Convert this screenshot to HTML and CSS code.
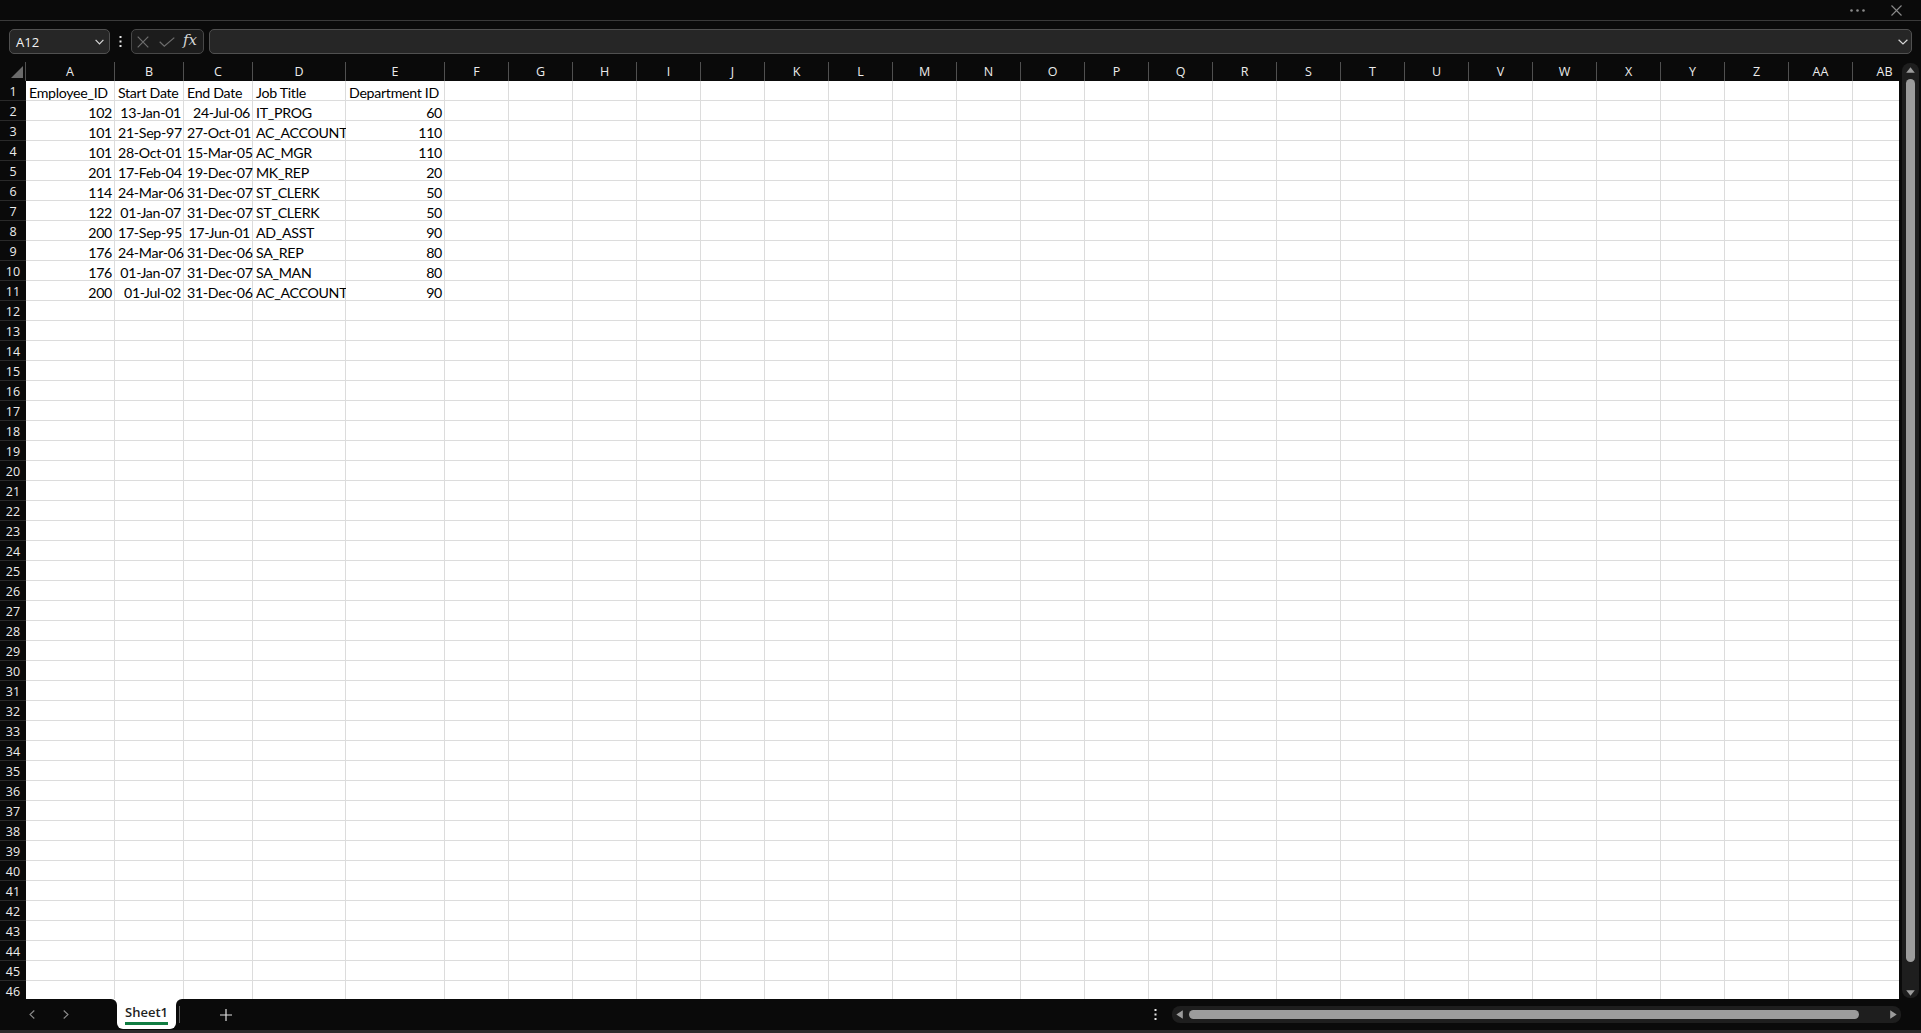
FILE: index.html
```html
<!DOCTYPE html>
<html lang="en">
<head>
<meta charset="utf-8">
<title>Sheet1</title>
<link rel="stylesheet" href="styles.css">
</head>
<body>
<div class="app">
  <div class="titlebar">
    <svg class="tb-dots" width="15" height="3" viewBox="0 0 15 3"><circle cx="1.5" cy="1.5" r="1.3" fill="#8a8a8a"/><circle cx="7.5" cy="1.5" r="1.3" fill="#8a8a8a"/><circle cx="13.5" cy="1.5" r="1.3" fill="#8a8a8a"/></svg>
    <svg class="tb-close" width="11" height="11" viewBox="0 0 11 11"><path d="M0.5 0.5L10.5 10.5M10.5 0.5L0.5 10.5" stroke="#8a8a8a" stroke-width="1.1" fill="none"/></svg>
  </div>

  <div class="formulabar">
    <div class="namebox">
      <span class="namebox-text">A12</span>
      <svg width="9" height="6" viewBox="0 0 9 6"><path d="M0.6 0.8L4.5 4.8L8.4 0.8" stroke="#d6d6d6" stroke-width="1.2" fill="none"/></svg>
    </div>
    <div class="fb-sep">
      <svg width="3" height="11" viewBox="0 0 3 11"><rect x="0.5" y="0" width="2" height="2" fill="#e6e6e6"/><rect x="0.5" y="4.5" width="2" height="2" fill="#e6e6e6"/><rect x="0.5" y="9" width="2" height="2" fill="#e6e6e6"/></svg>
    </div>
    <div class="fxbox">
      <svg class="fx-cancel" width="12" height="12" viewBox="0 0 12 12"><path d="M0.7 0.7L11.3 11.3M11.3 0.7L0.7 11.3" stroke="#6e6e6e" stroke-width="1.2" fill="none"/></svg>
      <svg class="fx-enter" width="16" height="10" viewBox="0 0 16 10"><path d="M0.7 4.8L5.3 9.2L15.3 0.6" stroke="#6e6e6e" stroke-width="1.2" fill="none"/></svg>
      <span class="fx">fx</span>
    </div>
    <div class="finput">
      <svg width="10" height="6" viewBox="0 0 10 6"><path d="M0.6 0.8L5 5L9.4 0.8" stroke="#d6d6d6" stroke-width="1.2" fill="none"/></svg>
    </div>
  </div>

  <div class="main">
    <div class="sheet">
      <div class="grid" id="grid"></div>
    </div>
    <div class="vscroll">
      <div class="vtrack">
        <svg width="9" height="6" viewBox="0 0 9 6"><path d="M4.5 0.3L8.8 5.8H0.2Z" fill="#9c9c9c"/></svg>
        <div class="vthumb"></div>
        <svg class="vdown" width="9" height="6" viewBox="0 0 9 6"><path d="M0.2 0.2H8.8L4.5 5.7Z" fill="#9c9c9c"/></svg>
      </div>
    </div>
  </div>

  <div class="bottombar">
    <div class="nav">
      <svg width="6" height="9" viewBox="0 0 6 9"><path d="M5.3 0.5L1 4.5L5.3 8.5" stroke="#8c8c8c" stroke-width="1.1" fill="none"/></svg>
      <svg width="6" height="9" viewBox="0 0 6 9"><path d="M0.7 0.5L5 4.5L0.7 8.5" stroke="#8c8c8c" stroke-width="1.1" fill="none"/></svg>
    </div>
    <div class="tab"><span class="tab-label">Sheet1</span></div>
    <div class="rest">
      <div class="tab-sep"></div>
      <svg class="plus" width="12" height="12" viewBox="0 0 12 12"><path d="M6 0V12M0 6H12" stroke="#e0e0e0" stroke-width="1.2" fill="none"/></svg>
      <div class="spacer"></div>
      <svg class="kebab" width="3" height="11" viewBox="0 0 3 11"><rect x="0.5" y="0" width="2" height="2" fill="#e6e6e6"/><rect x="0.5" y="4.5" width="2" height="2" fill="#e6e6e6"/><rect x="0.5" y="9" width="2" height="2" fill="#e6e6e6"/></svg>
      <div class="htrack">
        <svg width="7" height="9" viewBox="0 0 7 9"><path d="M6.8 0.2V8.8L0.3 4.5Z" fill="#9c9c9c"/></svg>
        <div class="hthumb"></div>
        <svg class="hright" width="7" height="9" viewBox="0 0 7 9"><path d="M0.2 0.2V8.8L6.7 4.5Z" fill="#9c9c9c"/></svg>
      </div>
    </div>
  </div>
  <div class="winedge"></div>
</div>
<script src="script.js"></script>
</body>
</html>
```

FILE: styles.css
```css
* {
  box-sizing: border-box;
}

html,
body {
  margin: 0;
  padding: 0;
  background: #0a0a0a;
  overflow: hidden;
}

.app {
  width: 1921px;
  height: 1033px;
  display: flex;
  flex-direction: column;
  font-family: "Open Sans", "Noto Sans", sans-serif;
  background: #0a0a0a;
}

/* title bar */
.titlebar {
  height: 21px;
  flex: none;
  border-bottom: 1px solid #3a3a3a;
  display: flex;
  justify-content: flex-end;
  align-items: center;
  gap: 26px;
  padding-right: 19px;
}

/* formula bar */
.formulabar {
  height: 41px;
  flex: none;
  display: flex;
  align-items: center;
  padding: 0 9px;
}

.namebox {
  width: 101px;
  height: 25px;
  border: 1px solid #505050;
  border-radius: 5px;
  background: #262626;
  display: flex;
  align-items: center;
  justify-content: space-between;
  padding: 0 5px 0 6px;
  color: #f2f2f2;
  font-size: 13px;
}

.fb-sep {
  width: 21px;
  display: flex;
  justify-content: center;
}

.fxbox {
  width: 73px;
  height: 25px;
  border: 1px solid #484848;
  border-radius: 5px;
  background: #1c1c1c;
  display: flex;
  align-items: center;
  padding-left: 5px;
}

.fx-enter {
  margin-left: 10px;
}

.fx {
  margin-left: 8px;
  font-family: "DejaVu Serif", "Liberation Serif", serif;
  font-style: italic;
  font-size: 15px;
  color: #d4d4d4;
  line-height: 1;
  margin-top: -2px;
}

.finput {
  flex: 1;
  margin-left: 5px;
  height: 25px;
  border: 1px solid #505050;
  border-radius: 5px;
  background: #262626;
  display: flex;
  justify-content: flex-end;
  align-items: center;
  padding-right: 3px;
}

/* sheet */
.main {
  height: 937px;
  flex: none;
  display: flex;
}

.sheet {
  width: 1899px;
  flex: none;
  overflow: hidden;
  background: #ffffff;
}

.grid {
  display: grid;
  grid-template-columns: 26px 89px 69px 69px 93px 99px repeat(23, 64px);
  grid-template-rows: 19px;
  grid-auto-rows: 20px;
  width: max-content;
}

.corner {
  background: #0a0a0a;
  border-right: 1px solid #505050;
  display: flex;
  align-items: flex-end;
  justify-content: flex-end;
  padding: 0 2px 3px 0;
}

.tri {
  width: 12px;
  height: 12px;
  background: #6b6b6b;
  clip-path: polygon(100% 0, 100% 100%, 0 100%);
}

.ch {
  background: #0a0a0a;
  color: #ececec;
  font-size: 12.5px;
  display: flex;
  align-items: center;
  justify-content: center;
  border-right: 1px solid #505050;
}

.rh {
  background: #0a0a0a;
  color: #ececec;
  font-size: 12.5px;
  display: flex;
  align-items: center;
  justify-content: center;
  padding-top: 1px;
  border-bottom: 1px solid #2a2a2a;
}

.c {
  background: #ffffff;
  border-right: 1px solid #dcdcdc;
  border-bottom: 1px solid #dcdcdc;
  font-family: Lato, "Liberation Sans", sans-serif;
  font-size: 14.2px;
  letter-spacing: -0.3px;
  line-height: 23px;
  padding: 0 2px 0 3px;
  white-space: nowrap;
  color: #000000;
}

.r {
  text-align: right;
}

/* vertical scrollbar */
.vscroll {
  width: 22px;
  flex: none;
  padding: 1px 2px 1px 3px;
  display: flex;
}

.vtrack {
  flex: 1;
  background: #1e1e1e;
  border-radius: 8px;
  display: flex;
  flex-direction: column;
  align-items: center;
  padding: 4px 0 2px 0;
}

.vthumb {
  width: 9px;
  height: 883px;
  margin-top: 6px;
  background: #9c9c9c;
  border-radius: 5px;
}

.vdown {
  margin-top: auto;
}

/* bottom bar */
.bottombar {
  height: 31px;
  flex: none;
  display: flex;
  background: linear-gradient(#ffffff 50%, #0a0a0a 50%);
}

.nav {
  width: 117px;
  background: #0a0a0a;
  border-top-right-radius: 6px;
  display: flex;
  align-items: center;
  gap: 28px;
  padding-left: 29px;
}

.tab {
  width: 59px;
  height: 30px;
  background: #ffffff;
  border-radius: 0 0 6px 6px;
  display: flex;
  justify-content: center;
  align-items: flex-start;
  padding-top: 5px;
}

.tab-label {
  display: inline-block;
  font-size: 13px;
  font-weight: 600;
  color: #1f1f1f;
  line-height: 17px;
  padding-bottom: 1px;
  border-bottom: 3px solid #107c41;
}

.rest {
  flex: 1;
  background: #0a0a0a;
  border-top-left-radius: 6px;
  display: flex;
  align-items: center;
  padding-left: 3px;
  padding-right: 20px;
}

.tab-sep {
  width: 1px;
  height: 17px;
  background: #5c5c5c;
}

.plus {
  margin-left: 40px;
}

.spacer {
  flex: 1;
}

.kebab {
  margin-right: 15px;
}

.htrack {
  width: 729px;
  height: 17px;
  background: #1e1e1e;
  border-radius: 8px;
  display: flex;
  align-items: center;
  padding: 0 4px 0 4px;
}

.hthumb {
  width: 670px;
  height: 9px;
  margin-left: 6px;
  background: #9c9c9c;
  border-radius: 5px;
}

.hright {
  margin-left: auto;
}

.winedge {
  height: 3px;
  flex: none;
  background: #2b2b2b;
}
```

FILE: script.js
```js
(function () {
  var data = [
    ['Employee_ID', 'Start Date', 'End Date', 'Job Title', 'Department ID'],
    ['102', '13-Jan-01', '24-Jul-06', 'IT_PROG', '60'],
    ['101', '21-Sep-97', '27-Oct-01', 'AC_ACCOUNT', '110'],
    ['101', '28-Oct-01', '15-Mar-05', 'AC_MGR', '110'],
    ['201', '17-Feb-04', '19-Dec-07', 'MK_REP', '20'],
    ['114', '24-Mar-06', '31-Dec-07', 'ST_CLERK', '50'],
    ['122', '01-Jan-07', '31-Dec-07', 'ST_CLERK', '50'],
    ['200', '17-Sep-95', '17-Jun-01', 'AD_ASST', '90'],
    ['176', '24-Mar-06', '31-Dec-06', 'SA_REP', '80'],
    ['176', '01-Jan-07', '31-Dec-07', 'SA_MAN', '80'],
    ['200', '01-Jul-02', '31-Dec-06', 'AC_ACCOUNT', '90']
  ];

  var cols = [];
  for (var i = 0; i < 26; i++) cols.push(String.fromCharCode(65 + i));
  cols.push('AA', 'AB');

  var grid = document.getElementById('grid');
  var frag = document.createDocumentFragment();

  function el(cls, text) {
    var d = document.createElement('div');
    d.className = cls;
    if (text !== undefined && text !== '') d.textContent = text;
    return d;
  }

  var corner = el('corner');
  corner.appendChild(el('tri'));
  frag.appendChild(corner);
  cols.forEach(function (c) { frag.appendChild(el('ch', c)); });

  for (var r = 1; r <= 46; r++) {
    frag.appendChild(el('rh', String(r)));
    var row = data[r - 1] || [];
    for (var c = 0; c < cols.length; c++) {
      var txt = row[c] || '';
      var cls = 'c';
      if (r > 1 && c < 5 && c !== 3) cls += ' r';
      frag.appendChild(el(cls, txt));
    }
  }
  grid.appendChild(frag);
})();
```
